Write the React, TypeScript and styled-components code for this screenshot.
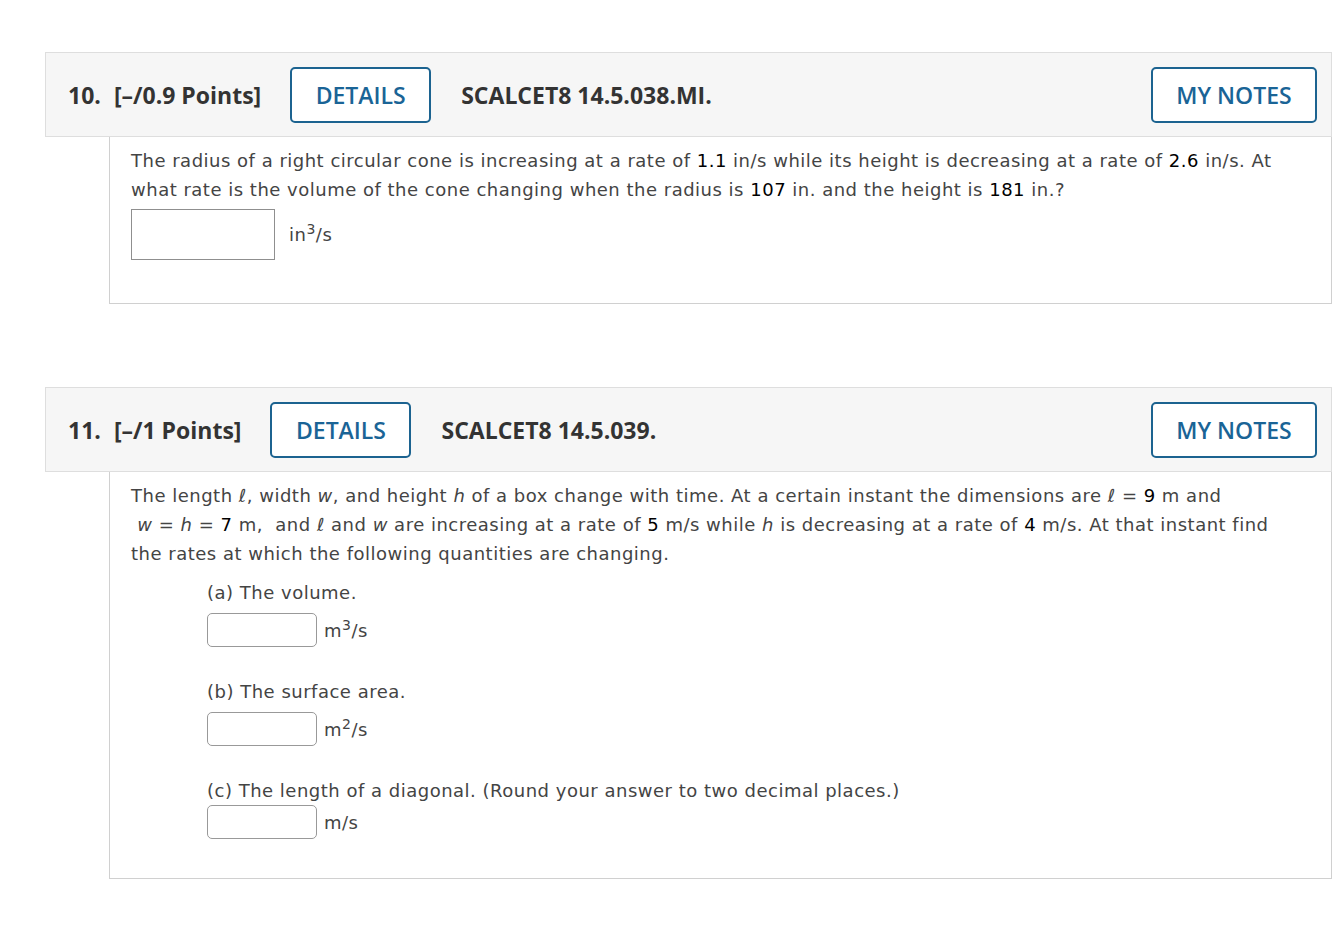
import React from 'react';
import styled, { createGlobalStyle } from 'styled-components';

const GlobalStyle = createGlobalStyle`
  body {
    margin: 0;
    background: #ffffff;
  }
`;

const Page = styled.div`
  padding: 52px 3px 40px 45px;
`;

const Question = styled.section<{ $gap?: number }>`
  margin-bottom: ${(p) => p.$gap ?? 0}px;
`;

const Header = styled.div`
  height: 85px;
  box-sizing: border-box;
  display: flex;
  align-items: center;
  padding: 0 14px 0 22px;
  background: #f6f6f6;
  border: 1px solid #dedede;
  font-family: 'Open Sans', 'Liberation Sans', sans-serif;
  color: #333333;
`;

const Num = styled.span`
  font-weight: 700;
  font-size: 23px;
  margin-right: 13px;
`;

const Points = styled.span`
  font-weight: 700;
  font-size: 23px;
  margin-right: 29px;
`;

const OutlineButton = styled.button<{ $w: number }>`
  width: ${(p) => p.$w}px;
  height: 56px;
  box-sizing: border-box;
  border: 2.5px solid #1c6390;
  border-radius: 5px;
  background: #ffffff;
  color: #1a6496;
  font-family: 'Open Sans', 'Liberation Sans', sans-serif;
  font-size: 23px;
  font-weight: 600;
  cursor: pointer;
  padding: 0;
`;

const Code = styled.span`
  margin-left: 30px;
  font-weight: 700;
  font-size: 23px;
  flex: 1;
`;

const Body = styled.div<{ $pb: number }>`
  margin-left: 64px;
  border: 1px solid #d0d0d0;
  border-top: none;
  padding: 9px 40px ${(p) => p.$pb}px 21px;
  font-family: 'DejaVu Sans', Verdana, sans-serif;
  font-size: 18px;
  letter-spacing: 0.5px;
  line-height: 29px;
  color: #444444;
`;

const Text = styled.p`
  margin: 0;
`;

const Val = styled.span`
  color: #000000;
`;

const AnswerRow = styled.div<{ $mt: number }>`
  display: flex;
  align-items: center;
  margin-top: ${(p) => p.$mt}px;
`;

const BigInput = styled.input`
  width: 144px;
  height: 51px;
  box-sizing: border-box;
  border: 1px solid #8f8f8f;
  border-radius: 0;
  margin: 0 14px 0 0;
  background: #ffffff;
`;

const SmallInput = styled.input`
  width: 110px;
  height: 34px;
  box-sizing: border-box;
  border: 1px solid #999999;
  border-radius: 5px;
  margin: 0 7px 0 0;
  background: #ffffff;
`;

const Unit = styled.span`
  color: #444444;
  sup {
    font-size: 14px;
    line-height: 0;
  }
`;

const Parts = styled.div`
  margin-left: 76px;
  margin-top: 10px;
`;

const Part = styled.div<{ $mt: number }>`
  margin-top: ${(p) => p.$mt}px;
`;

const PartLabel = styled.div`
  line-height: 29px;
`;

export default function App() {
  return (
    <>
      <GlobalStyle />
      <Page>
        <Question $gap={83}>
          <Header>
            <Num>10.</Num>
            <Points>[–/0.9 Points]</Points>
            <OutlineButton $w={141}>DETAILS</OutlineButton>
            <Code>SCALCET8 14.5.038.MI.</Code>
            <OutlineButton $w={166}>MY NOTES</OutlineButton>
          </Header>
          <Body $pb={43}>
            <Text>
              The radius of a right circular cone is increasing at a rate of <Val>1.1</Val> in/s while its height is
              decreasing at a rate of <Val>2.6</Val> in/s. At what rate is the volume of the cone changing when the
              radius is <Val>107</Val> in. and the height is <Val>181</Val> in.?
            </Text>
            <AnswerRow $mt={5}>
              <BigInput type="text" />
              <Unit>
                in<sup>3</sup>/s
              </Unit>
            </AnswerRow>
          </Body>
        </Question>

        <Question>
          <Header>
            <Num>11.</Num>
            <Points>[–/1 Points]</Points>
            <OutlineButton $w={141}>DETAILS</OutlineButton>
            <Code>SCALCET8 14.5.039.</Code>
            <OutlineButton $w={166}>MY NOTES</OutlineButton>
          </Header>
          <Body $pb={39}>
            <Text>
              The length ℓ, width <i>w</i>, and height <i>h</i> of a box change with time. At a certain instant the
              dimensions are ℓ = <Val>9</Val> m and <br />
              &nbsp;<i>w</i> = <i>h</i> = <Val>7</Val> m,&nbsp; and ℓ and <i>w</i> are increasing at a rate of{' '}
              <Val>5</Val> m/s while <i>h</i> is decreasing at a rate of <Val>4</Val> m/s. At that instant find the
              rates at which the following quantities are changing.
            </Text>
            <Parts>
              <Part $mt={0}>
                <PartLabel>(a) The volume.</PartLabel>
                <AnswerRow $mt={6}>
                  <SmallInput type="text" />
                  <Unit>
                    m<sup>3</sup>/s
                  </Unit>
                </AnswerRow>
              </Part>
              <Part $mt={30}>
                <PartLabel>(b) The surface area.</PartLabel>
                <AnswerRow $mt={6}>
                  <SmallInput type="text" />
                  <Unit>
                    m<sup>2</sup>/s
                  </Unit>
                </AnswerRow>
              </Part>
              <Part $mt={30}>
                <PartLabel>(c) The length of a diagonal. (Round your answer to two decimal places.)</PartLabel>
                <AnswerRow $mt={0}>
                  <SmallInput type="text" />
                  <Unit>m/s</Unit>
                </AnswerRow>
              </Part>
            </Parts>
          </Body>
        </Question>
      </Page>
    </>
  );
}
